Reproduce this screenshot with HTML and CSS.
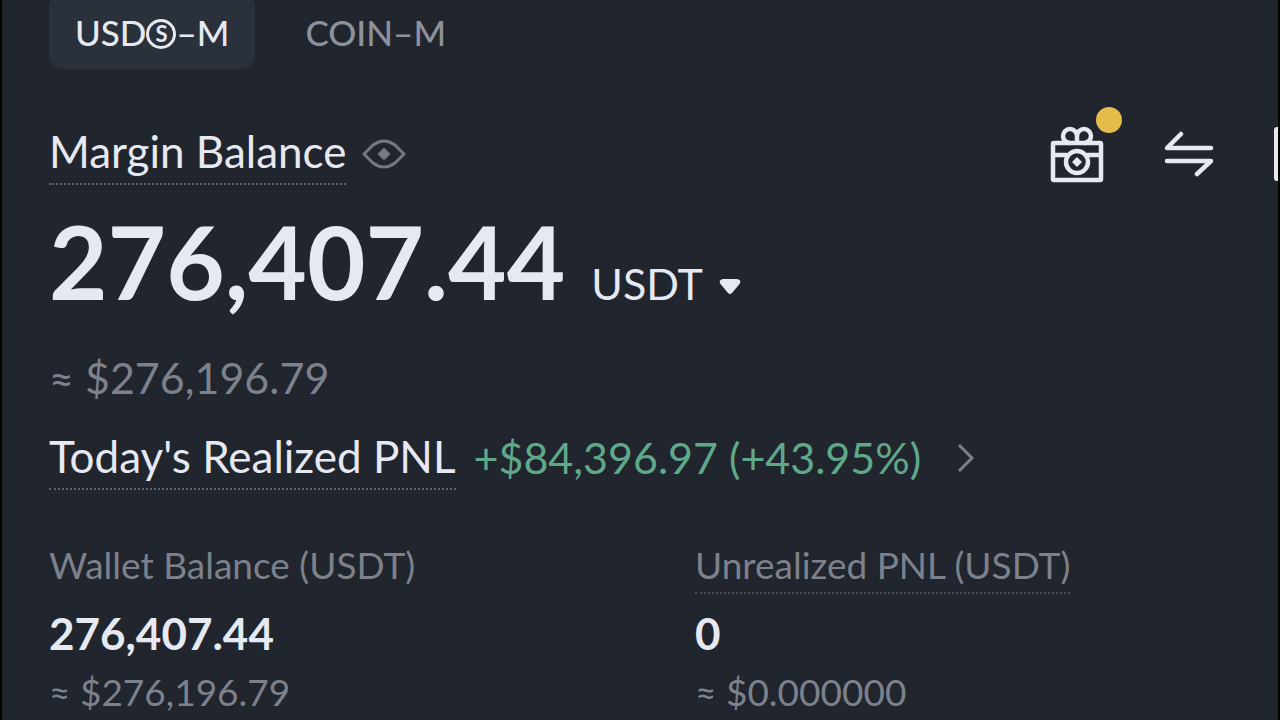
FILE: index.html
```
<!DOCTYPE html>
<html lang="en">
  <head>
    <meta charset="UTF-8" />
    <meta name="viewport" content="width=device-width, initial-scale=1.0" />
    <title>Futures Wallet</title>
    <link rel="stylesheet" href="styles.css">
  </head>
  <body>
    <main class="wallet">
      <nav class="tabs">
        <button class="tab active">USD<span class="coin">S</span>–M</button>
        <button class="tab">COIN–M</button>
      </nav>

      <header class="balance-header">
        <h1 class="label underlined">Margin Balance</h1>
        <button class="icon-button eye" aria-label="Hide balance">
          <svg width="44" height="30" viewBox="0 0 44 30" fill="none" stroke="currentColor" stroke-width="3" stroke-linejoin="round">
            <path d="M2 15 L11 6 Q22 -2 33 6 L42 15 L33 24 Q22 32 11 24 Z" />
            <path d="M22 8.500 L28.500 15 L22 21.500 L15.500 15 Z" fill="currentColor" stroke="none" />
          </svg>
        </button>
        <div class="actions">
          <button class="icon-button gift" aria-label="Rewards">
            <svg width="54" height="58" viewBox="0 0 54 58" fill="none" stroke="currentColor" stroke-width="4.500" stroke-linejoin="round">
              <rect x="3" y="18" width="48" height="37" rx="1" />
              <path d="M3 30 H17 M37 30 H51" />
              <circle cx="27" cy="37" r="11" />
              <path d="M27 18 V11 A7 7 0 1 0 20 18 M27 11 A7 7 0 1 1 34 18" />
              <path d="M27 32 L32 37 L27 42 L22 37 Z" fill="currentColor" stroke="none" />
            </svg>
            <span class="dot"></span>
          </button>
          <button class="icon-button" aria-label="Transfer">
            <svg width="50" height="46" viewBox="0 0 50 46" fill="none" stroke="currentColor" stroke-width="4.500" stroke-linecap="round" stroke-linejoin="round">
              <path d="M47 17 H3 L17 3" />
              <path d="M3 30 H47 L33 43" />
            </svg>
          </button>
          <button class="icon-button orders" aria-label="Orders">
            <svg width="46" height="54" viewBox="0 0 46 54" fill="none" stroke="currentColor" stroke-width="4" stroke-linejoin="round">
              <rect x="2" y="2" width="42" height="50" rx="1" />
            </svg>
          </button>
        </div>
      </header>

      <section class="total">
        <strong class="amount">276,407.44</strong>
        <button class="currency">
          USDT
          <svg width="22" height="21" viewBox="0 -5 22 21" fill="currentColor">
            <path d="M4 0 H18 Q23 1 20.500 5 L13 14 Q11 16 9 14 L1.500 5 Q-1 1 4 0 Z" />
          </svg>
        </button>
      </section>
      <p class="approx">≈ $276,196.79</p>

      <section class="pnl">
        <span class="label underlined">Today's Realized PNL</span>
        <a class="pnl-link" href="#">
          +$84,396.97 (+43.95%)
          <svg width="18" height="30" viewBox="0 0 18 30" fill="none" stroke="currentColor" stroke-width="3">
            <path d="M2 2 L15 15 L2 28" />
          </svg>
        </a>
      </section>

      <section class="details">
        <div class="detail">
          <h2>Wallet Balance (USDT)</h2>
          <strong>276,407.44</strong>
          <p>≈ $276,196.79</p>
        </div>
        <div class="detail">
          <h2 class="underlined">Unrealized PNL (USDT)</h2>
          <strong>0</strong>
          <p>≈ $0.000000</p>
        </div>
      </section>
    </main>
  </body>
</html>
```

FILE: styles.css
```
* {
  box-sizing: border-box;
}
body {
  margin: 0;
  background: #000;
  color: #e6e9f2;
  font-family: Lato, "Liberation Sans", sans-serif;
  font-size: 43px;
  line-height: 40px;
}
h1,
h2,
p {
  margin: 0;
  font-weight: 400;
}
button {
  padding: 0;
  border: none;
  background: none;
  color: inherit;
  font: inherit;
  cursor: pointer;
}
svg {
  display: block;
}
.wallet {
  min-height: 100vh;
  margin: 0 2px;
  padding-left: 47px;
  background: #21252e;
  overflow: hidden;
}
.tabs {
  display: flex;
}
.tab {
  padding: 12px 26px 17px;
  border-radius: 4px 4px 14px 14px;
  color: #8d919b;
  font-size: 35px;
  font-weight: 500;
}
.tab.active {
  margin-right: 24px;
  background: #2b313b;
  color: #e6e9f2;
}
.coin {
  display: inline-block;
  width: 30px;
  height: 30px;
  border: 3px solid;
  border-radius: 50%;
  font-size: 22px;
  font-weight: 700;
  line-height: 24px;
  text-align: center;
  vertical-align: 4px;
}
.underlined {
  border-bottom: 2px dotted #5d626c;
}
.label {
  padding-bottom: 12px;
  font-size: 44px;
}
.balance-header {
  display: flex;
  align-items: flex-start;
  margin-top: 62px;
}
.eye {
  margin: 8px 0 0 16px;
  color: #747984;
}
.actions {
  display: flex;
  align-items: center;
  gap: 60px;
  height: 46px;
  margin-left: auto;
}
.gift {
  position: relative;
}
.dot {
  position: absolute;
  top: -18px;
  right: -18px;
  width: 26px;
  height: 26px;
  border-radius: 50%;
  background: #e3bc49;
}
/* the last action runs off the edge of the screen */
.orders {
  width: 4px;
  overflow: hidden;
}
.total {
  display: flex;
  align-items: baseline;
  gap: 26px;
  margin-top: 28px;
}
.amount {
  font-size: 101px;
  line-height: 96px;
}
.currency {
  display: flex;
  align-items: center;
  gap: 16px;
}
.approx {
  margin-top: 49px;
  color: #7c818b;
}
.pnl {
  display: flex;
  align-items: flex-start;
  gap: 18px;
  margin-top: 38px;
}
.pnl-link {
  display: flex;
  align-items: center;
  gap: 36px;
  color: #5fa98a;
  line-height: 44px;
  text-decoration: none;
}
.pnl-link svg {
  color: #7c818b;
}
.details {
  display: grid;
  grid-template-columns: 1fr 1fr;
  gap: 63px;
  margin-top: 55px;
}
.detail {
  display: flex;
  flex-direction: column;
  align-items: flex-start;
  color: #7c818b;
  font-size: 37px;
}
.detail h2 {
  height: 49px;
  font-size: 37px;
}
.detail .underlined {
  border-color: #4a4f59;
}
.detail strong {
  margin: 19px 0;
  color: #e6e9f2;
  font-size: 44px;
}
```
